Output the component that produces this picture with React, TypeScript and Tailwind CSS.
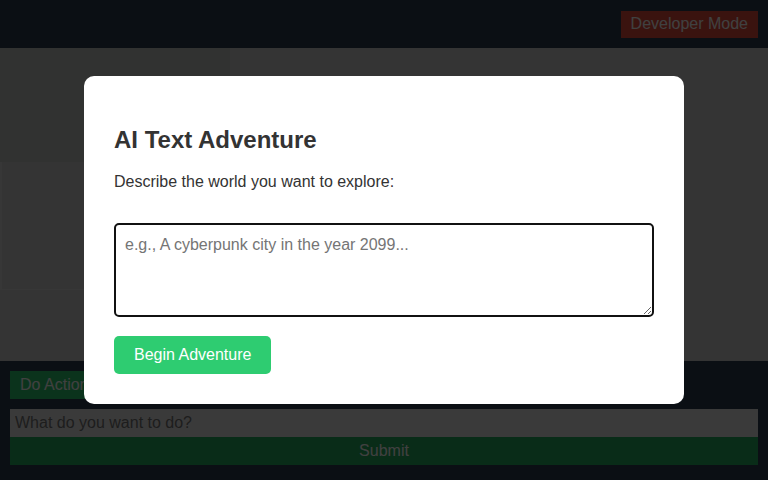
import React from "react";

const FONT = { fontFamily: '"Liberation Sans", Arial, sans-serif' };

function Header() {
  return (
    <header className="flex h-12 shrink-0 items-center justify-end bg-[#2c3e50] pr-2.5">
      <button className="h-[27px] bg-[#e74c3c] px-2.5 text-base text-white">Developer Mode</button>
    </header>
  );
}

function Main() {
  return (
    <main className="flex flex-1 bg-[#d0d0d0]">
      <aside className="flex w-[230px] shrink-0 flex-col">
        <div className="h-[114px] bg-[#c2c5c2]" />
        <div className="h-[128px] border-b border-l-2 border-[#dadada] bg-[#d0d0d0]" />
      </aside>
      <section className="flex-1" />
    </main>
  );
}

function Footer() {
  return (
    <footer className="flex shrink-0 flex-col bg-[#2c3e50] px-2.5 pb-[15px] pt-2.5">
      <div>
        <button className="h-7 bg-[#2ecc71] px-2.5 text-base text-white">Do Action</button>
      </div>
      <input
        className="mt-2.5 h-7 w-full bg-[#e8e8e8] px-[5px] text-base text-[#333] outline-none placeholder:text-[#757575]"
        placeholder="What do you want to do?"
      />
      <button className="h-7 w-full bg-[#27ae60] text-base text-white">Submit</button>
    </footer>
  );
}

function StartModal() {
  return (
    <div className="fixed inset-0 flex items-center justify-center bg-black/75">
      <div className="flex w-[600px] flex-col items-start rounded-[10px] bg-white px-[30px] pb-[30px] pt-[50px]">
        <h2 className="text-2xl leading-7 font-bold text-[#333]">AI Text Adventure</h2>
        <p className="mt-[19px] text-base leading-[18px] text-[#333]">Describe the world you want to explore:</p>
        <textarea
          className="mt-8 h-[94px] w-full rounded-[5px] border-2 border-[#111] py-2 pl-[9px] pr-2 text-base text-[#333] outline-none placeholder:text-[#757575]"
          placeholder="e.g., A cyberpunk city in the year 2099..."
        />
        <button className="mt-[19px] rounded-[5px] bg-[#2ecc71] px-5 py-2.5 text-base leading-[18px] text-white">
          Begin Adventure
        </button>
      </div>
    </div>
  );
}

export default function App() {
  return (
    <div className="relative flex h-screen flex-col overflow-hidden" style={FONT}>
      <Header />
      <Main />
      <Footer />
      <StartModal />
    </div>
  );
}
